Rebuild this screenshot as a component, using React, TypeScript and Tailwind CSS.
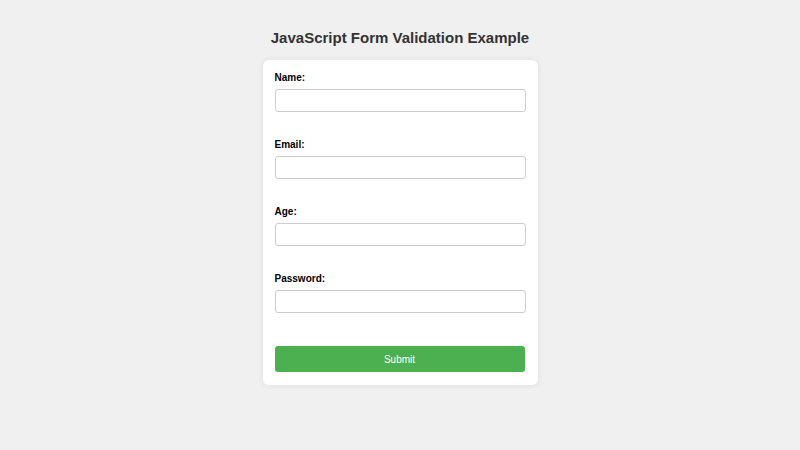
import React from "react";

const fields = [
  { label: "Name:", type: "text" },
  { label: "Email:", type: "email" },
  { label: "Age:", type: "number" },
  { label: "Password:", type: "password" },
];

export default function App() {
  return (
    <div
      className="min-h-[450px] w-full bg-[#f0f0f0] flex flex-col items-center"
      style={{ fontFamily: '"Liberation Sans", Arial, sans-serif' }}
    >
      <h2 className="mt-[29px] h-[18px] leading-[18px] text-[15px] font-bold text-[#333333]">
        JavaScript Form Validation Example
      </h2>
      <form
        className="mt-[13px] w-[275px] bg-white rounded-[6px] shadow-[0_0_6px_rgba(0,0,0,0.08)] px-[12px] pt-[11px] pb-[13px] flex flex-col"
        onSubmit={(e) => e.preventDefault()}
      >
        {fields.map((f) => (
          <div key={f.label} className="flex flex-col mb-[26px]">
            <label className="block pt-[1px] leading-[12px] text-[10px] font-bold text-black mb-[5px]">
              {f.label}
            </label>
            <input
              type={f.type}
              className="h-[23px] w-[251px] border border-[#cccccc] rounded-[3px] bg-white outline-none"
            />
          </div>
        ))}
        <button
          type="submit"
          className="mt-[7px] h-[26px] w-[250px] bg-[#4caf50] text-white text-[10px] rounded-[3px]"
        >
          Submit
        </button>
      </form>
    </div>
  );
}
